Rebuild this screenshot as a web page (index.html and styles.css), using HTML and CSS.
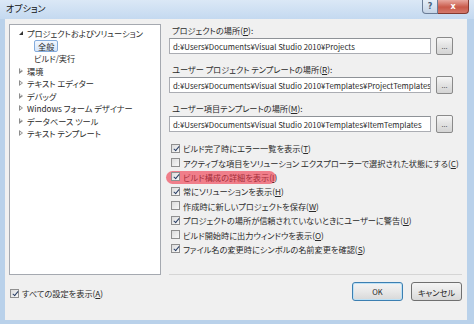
FILE: index.html
```html
<!DOCTYPE html>
<html lang="ja">
<head>
    <meta charset="UTF-8">
    <title>オプション</title>
    <link rel="stylesheet" href="styles.css">
</head>
<body>
    <div class="window">
        <div class="titlebar">
            <span class="title">オプション</span>
            <div class="caption-buttons">
                <span class="cap-btn help">?</span>
                <span class="cap-btn close">x</span>
            </div>
        </div>

        <div class="client">
            <div class="main">
                <ul class="tree">
                    <li class="node open"><span class="arrow"></span>プロジェクトおよびソリューション</li>
                    <li class="leaf"><span class="selected">全般</span></li>
                    <li class="leaf">ビルド/実行</li>
                    <li class="node"><span class="arrow"></span>環境</li>
                    <li class="node"><span class="arrow"></span>テキスト エディター</li>
                    <li class="node"><span class="arrow"></span>デバッグ</li>
                    <li class="node"><span class="arrow"></span>Windows フォーム デザイナー</li>
                    <li class="node"><span class="arrow"></span>データベース ツール</li>
                    <li class="node"><span class="arrow"></span>テキスト テンプレート</li>
                </ul>

                <div class="settings">
                    <div class="field">
                        <label>プロジェクトの場所(<u>P</u>):</label>
                        <div class="path-row">
                            <div class="path">d:¥Users¥Documents¥Visual Studio 2010¥Projects</div>
                            <button type="button" class="browse">...</button>
                        </div>
                    </div>
                    <div class="field">
                        <label>ユーザー プロジェクト テンプレートの場所(<u>R</u>):</label>
                        <div class="path-row">
                            <div class="path">d:¥Users¥Documents¥Visual Studio 2010¥Templates¥ProjectTemplates</div>
                            <button type="button" class="browse">...</button>
                        </div>
                    </div>
                    <div class="field">
                        <label>ユーザー項目テンプレートの場所(<u>M</u>):</label>
                        <div class="path-row">
                            <div class="path">d:¥Users¥Documents¥Visual Studio 2010¥Templates¥ItemTemplates</div>
                            <button type="button" class="browse">...</button>
                        </div>
                    </div>

                    <ul class="checks">
                        <li><span class="cb on"></span>ビルド完了時にエラー一覧を表示(<u>T</u>)</li>
                        <li><span class="cb"></span>アクティブな項目をソリューション エクスプローラーで選択された状態にする(<u>C</u>)</li>
                        <li class="marked"><span class="cb on"></span>ビルド構成の詳細を表示(<u>I</u>)</li>
                        <li><span class="cb on"></span>常にソリューションを表示(<u>H</u>)</li>
                        <li><span class="cb"></span>作成時に新しいプロジェクトを保存(<u>W</u>)</li>
                        <li><span class="cb on"></span>プロジェクトの場所が信頼されていないときにユーザーに警告(<u>U</u>)</li>
                        <li><span class="cb"></span>ビルド開始時に出力ウィンドウを表示(<u>O</u>)</li>
                        <li><span class="cb on"></span>ファイル名の変更時にシンボルの名前変更を確認(<u>S</u>)</li>
                    </ul>
                </div>
            </div>

            <div class="footer">
                <div class="show-all"><span class="cb on"></span>すべての設定を表示(<u>A</u>)</div>
                <button type="button" class="btn default">OK</button>
                <button type="button" class="btn">キャンセル</button>
            </div>
        </div>
    </div>
</body>
</html>
```

FILE: styles.css
```css
body {
    margin: 0;
    font-family: "Noto Sans CJK JP", "Noto Sans", sans-serif;
    font-feature-settings: "palt";
    font-size: 8.2px;
    color: #2a2a2a;
}

ul {
    list-style: none;
    margin: 0;
    padding: 0;
}

u {
    text-decoration-thickness: 1px;
    text-underline-offset: 1px;
}

.window {
    width: 474px;
    height: 324px;
    background: #b9d1ea;
    display: flex;
    flex-direction: column;
    overflow: hidden;
}

/* Title bar */
.titlebar {
    height: 19px;
    display: flex;
    background: linear-gradient(#dbe8f6, #c4d9f0);
}

.title {
    padding: 2px 0 0 6px;
    font-size: 9px;
    color: #111;
}

.caption-buttons {
    margin-left: auto;
    margin-right: 5px;
    display: flex;
    height: 14px;
}

.cap-btn {
    height: 13px;
    border: 1px solid #6b7d97;
    border-top: none;
    display: flex;
    justify-content: center;
    align-items: center;
    font-family: "DejaVu Sans", sans-serif;
    font-weight: bold;
    font-size: 8px;
}

.help {
    width: 14px;
    border-radius: 0 0 0 4px;
    background: linear-gradient(#e6eef7, #c5d4e6);
    color: #4a5f7a;
}

.close {
    width: 30px;
    border-left: none;
    border-color: #84392f;
    border-radius: 0 0 4px 0;
    background: linear-gradient(#e8a89f, #c95a4a 55%, #d4786b);
    color: #fff;
}

/* Client area */
.client {
    flex: 1;
    margin: 0 7px 4px 5px;
    background: #f0f0f0;
    display: flex;
    flex-direction: column;
}

.main {
    display: flex;
    gap: 8px;
    padding: 5px 5px 0 4px;
    height: 256px;
    box-sizing: border-box;
}

.tree {
    width: 152px;
    flex-shrink: 0;
    background: #fff;
    border: 1px solid #a5a9b0;
    box-sizing: border-box;
    padding-top: 2px;
}

.tree li {
    height: 12.5px;
    line-height: 12.5px;
    white-space: nowrap;
    display: flex;
    align-items: center;
}

.node {
    padding-left: 9px;
}

.arrow {
    width: 0;
    height: 0;
    margin-right: 4px;
    border-left: 4px solid #8c8c8c;
    border-top: 3px solid transparent;
    border-bottom: 3px solid transparent;
    position: relative;
}

.arrow::after {
    content: "";
    position: absolute;
    left: -3px;
    top: -1.5px;
    border-left: 2px solid #fff;
    border-top: 1.5px solid transparent;
    border-bottom: 1.5px solid transparent;
}

.open .arrow {
    border: none;
    border-right: 4px solid #333;
    border-top: 4px solid transparent;
}

.open .arrow::after {
    display: none;
}

.leaf {
    padding-left: 24px;
}

.selected {
    display: inline-block;
    line-height: 10px;
    padding: 0 3px;
    border: 1px solid #84acdd;
    border-radius: 2px;
    background: linear-gradient(#f2f7fe, #d6e6fb);
}

/* Right column */
.settings {
    flex: 1;
    min-width: 0;
    border-bottom: 1px solid #d5d5d5;
    display: flex;
    flex-direction: column;
}

.field {
    margin-bottom: 8px;
}

.field label {
    display: block;
    height: 12px;
    line-height: 12px;
    padding-left: 3px;
    margin-bottom: 1px;
}

.path-row {
    display: flex;
    align-items: center;
    gap: 5px;
    padding-right: 9px;
}

.path {
    flex: 1;
    min-width: 0;
    height: 16px;
    line-height: 15px;
    box-sizing: border-box;
    border: 1px solid #abadb3;
    border-top-color: #8e9297;
    background: #fff;
    padding-left: 3px;
    font-size: 7.8px;
    white-space: nowrap;
    overflow: hidden;
}

.browse {
    width: 17px;
    height: 18px;
    flex-shrink: 0;
    padding: 0;
    border: 1px solid #8a8a8a;
    border-radius: 2px;
    background: linear-gradient(#f6f6f6, #e2e2e2 50%, #d4d4d4);
    font-family: inherit;
    font-size: 7px;
    color: #444;
}

.checks li {
    height: 14.4px;
    display: flex;
    align-items: center;
    white-space: nowrap;
    position: relative;
    padding-left: 2px;
}

.cb {
    width: 9px;
    height: 9px;
    box-sizing: border-box;
    border: 1px solid #8f8f8f;
    background: linear-gradient(135deg, #dcdcdc, #f8f8f8);
    margin-right: 3px;
    position: relative;
    flex-shrink: 0;
}

.cb.on::after {
    content: "";
    position: absolute;
    left: 2.5px;
    top: 0;
    width: 2px;
    height: 5px;
    border-right: 1.5px solid #2a3f66;
    border-bottom: 1.5px solid #2a3f66;
    transform: rotate(40deg);
}

.marked::before {
    content: "";
    position: absolute;
    left: -3px;
    top: 1px;
    width: 110px;
    height: 13px;
    border-radius: 7px;
    background: rgba(240, 50, 70, 0.6);
}

/* Footer */
.footer {
    flex: 1;
    display: flex;
    align-items: flex-start;
    gap: 8px;
    padding: 7px 5px 0 5px;
}

.show-all {
    display: flex;
    align-items: center;
    margin-top: 5px;
    margin-right: auto;
}

.btn {
    height: 19px;
    min-width: 51px;
    padding: 0 6px;
    border: 1px solid #707070;
    border-radius: 3px;
    background: linear-gradient(#f4f4f4, #e8e8e8 50%, #d8d8d8);
    font-family: inherit;
    font-feature-settings: "palt";
    font-size: 8.2px;
    color: #1e1e1e;
}

.btn.default {
    border-color: #3c7fb1;
    box-shadow: inset 0 0 0 1px #bde1f6;
    font-size: 7.5px;
}
```
